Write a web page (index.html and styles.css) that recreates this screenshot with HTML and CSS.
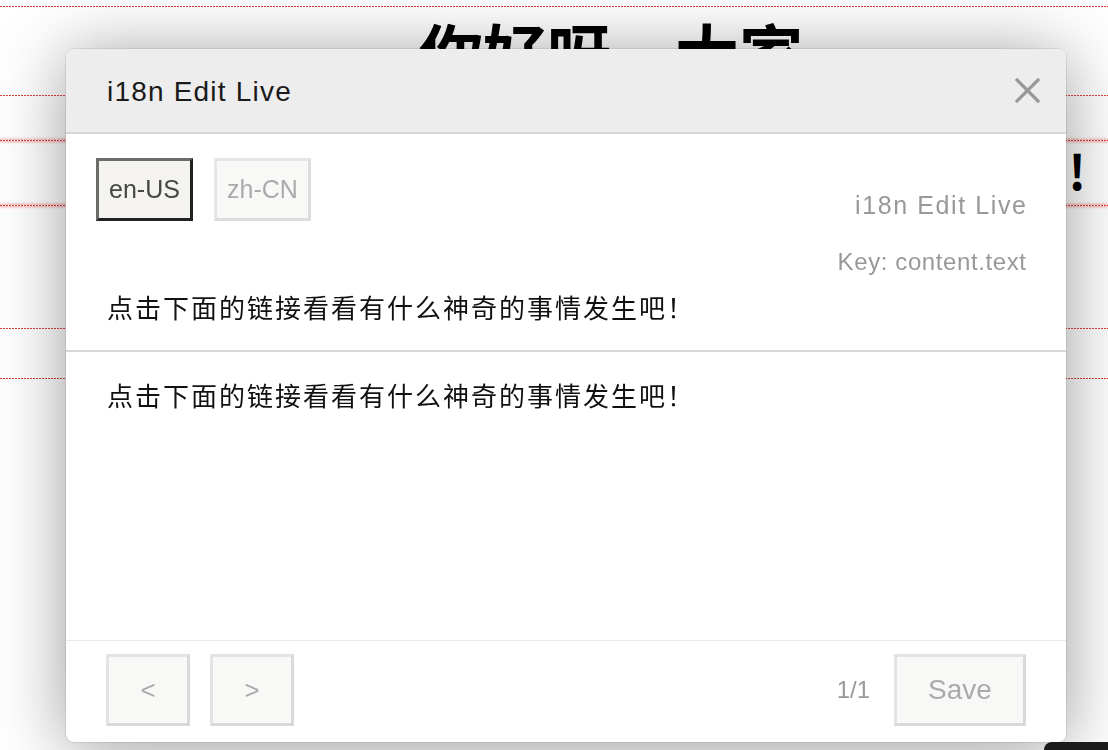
FILE: index.html
```html
<!DOCTYPE html>
<html lang="zh-CN">
<head>
<meta charset="utf-8">
<title>i18n Edit Live</title>
<link rel="stylesheet" href="styles.css">
</head>
<body>
<div class="page">
  <h1 class="heading i18n">你好呀，大家</h1>
  <p class="para i18n active">点击下面的链接看看有什么神奇的事情发生吧<span class="bang">!</span></p>
  <div class="link i18n"></div>
</div>

<div class="overlay">
  <div class="modal">
    <div class="modal-header">
      <span class="modal-title">i18n Edit Live</span>
      <button class="close" aria-label="close">
        <svg width="25" height="25" viewBox="0 0 25 25"><path d="M2 2 L23 23 M23 2 L2 23" stroke="#999" stroke-width="3.2" stroke-linecap="square" fill="none"/></svg>
      </button>
    </div>
    <div class="modal-top">
      <div class="top-row">
        <div class="langs">
          <button class="lang lang-on">en-US</button>
          <button class="lang lang-off">zh-CN</button>
        </div>
        <div class="meta">
          <div class="meta-title">i18n Edit Live</div>
          <div class="meta-key">Key: content.text</div>
        </div>
      </div>
      <div class="source">点击下面的链接看看有什么神奇的事情发生吧！</div>
    </div>
    <div class="editor">点击下面的链接看看有什么神奇的事情发生吧！</div>
    <div class="footer">
      <div class="nav">
        <button class="btn nav-btn">&lt;</button>
        <button class="btn nav-btn">&gt;</button>
      </div>
      <div class="footer-right">
        <span class="count">1/1</span>
        <button class="btn save">Save</button>
      </div>
    </div>
  </div>
</div>

<div class="fab"></div>
</body>
</html>
```

FILE: styles.css
```css
html, body {
  margin: 0;
  padding: 0;
  background: #ffffff;
  font-family: "Liberation Sans", "Noto Sans CJK SC", sans-serif;
  overflow: hidden;
}

.page {
  padding-top: 6px;
}

.i18n {
  position: relative;
  margin: 0;
  border-top: 1px solid transparent;
  border-bottom: 1px solid transparent;
}

.i18n::before,
.i18n::after {
  content: "";
  position: absolute;
  left: 0;
  right: 0;
  height: 1px;
  background: repeating-linear-gradient(90deg, #e0403c 0 2px, transparent 2px 3px);
}

.i18n::before {
  top: -1px;
}

.i18n::after {
  bottom: -1px;
}

.active::before,
.active::after {
  box-shadow: 0 0 3px 1px rgba(230, 70, 70, 0.45);
}

.heading {
  height: 88px;
  font-family: "Noto Sans CJK SC", sans-serif;
  font-size: 64px;
  font-weight: 700;
  line-height: 87px;
  padding-left: 419px;
  color: #000;
}

.para {
  margin-top: 44px;
  height: 58px;
  padding-bottom: 6px;
  font-family: "Noto Sans CJK SC", sans-serif;
  font-size: 48px;
  font-weight: 700;
  line-height: 57px;
  text-align: right;
  padding-right: 22px;
  white-space: nowrap;
  color: #000;
}

.bang {
  padding-left: 10px;
}

.link {
  margin-top: 122px;
  height: 49px;
}

.overlay {
  position: fixed;
  inset: 0;
  padding: 49px 42px 0 66px;
  box-sizing: border-box;
}

.modal {
  width: 1000px;
  height: 693px;
  background: #fff;
  border-radius: 8px;
  box-shadow: 0 6px 70px rgba(0, 0, 0, 0.4), 0 0 0 1px rgba(0, 0, 0, 0.08);
  overflow: hidden;
  display: flex;
  flex-direction: column;
  box-sizing: border-box;
}

.modal-header {
  height: 83px;
  flex: none;
  background: #ededed;
  border-bottom: 2px solid #d6d6d6;
  display: flex;
  align-items: center;
  justify-content: space-between;
  padding: 0 26px 0 41px;
}

.modal-title {
  font-size: 28px;
  letter-spacing: 1.2px;
  color: #1a1a1a;
  padding-top: 3px;
}

.close {
  border: 0;
  background: none;
  padding: 0;
  width: 25px;
  height: 25px;
  display: flex;
  cursor: pointer;
}

.modal-top {
  flex: none;
  height: 218px;
  box-sizing: border-box;
  padding: 24px 40px 0 30px;
  border-bottom: 2px solid #d8d8d8;
}

.top-row {
  display: flex;
  justify-content: space-between;
  align-items: flex-start;
}

.langs {
  display: flex;
  gap: 21px;
}

.lang {
  width: 97px;
  height: 63px;
  box-sizing: border-box;
  border: 3px solid;
  font-family: "Liberation Sans", sans-serif;
  font-size: 25px;
  padding: 0;
}

.lang-on {
  border-color: #6b6b6b #222 #222 #6b6b6b;
  background: #f4f3ef;
  color: #474747;
}

.lang-off {
  border-color: #e6e6e6 #dcdcdc #dcdcdc #e6e6e6;
  background: #f8f8f6;
  color: #aaa;
}

.meta {
  text-align: right;
  color: #999;
  padding-top: 32px;
}

.meta-title {
  font-size: 25px;
  line-height: 30px;
  letter-spacing: 1.6px;
  margin-right: -1.6px;
}

.meta-key {
  margin-top: 27px;
  font-size: 24px;
  line-height: 30px;
  letter-spacing: 0.6px;
  margin-right: -0.6px;
}

.source,
.editor {
  font-family: "Noto Sans CJK SC", sans-serif;
  font-size: 26px;
  letter-spacing: 2px;
  line-height: 30px;
  color: #111;
  white-space: nowrap;
}

.source {
  margin-top: 15px;
  padding-left: 11px;
}

.editor {
  flex: none;
  height: 288px;
  box-sizing: border-box;
  padding: 28px 41px 0;
}

.footer {
  flex: 1;
  border-top: 1px solid #ebebeb;
  display: flex;
  justify-content: space-between;
  align-items: flex-start;
  padding: 13px 40px 0 40px;
}

.nav {
  display: flex;
  gap: 20px;
}

.btn {
  height: 72px;
  box-sizing: border-box;
  border: 3px solid;
  border-color: #e3e3e3 #d9d9d9 #d9d9d9 #e3e3e3;
  background: #f8f8f6;
  color: #aaa;
  font-family: "Liberation Sans", sans-serif;
  padding: 0;
}

.nav-btn {
  width: 84px;
  font-size: 26px;
}

.footer-right {
  display: flex;
  align-items: center;
  gap: 24px;
}

.count {
  font-size: 24px;
  color: #999;
}

.save {
  width: 132px;
  font-size: 28px;
}

.fab {
  position: fixed;
  left: 1044px;
  top: 742px;
  width: 100px;
  height: 60px;
  background: #1b1b1b;
  border-radius: 8px 0 0 0;
}
```
